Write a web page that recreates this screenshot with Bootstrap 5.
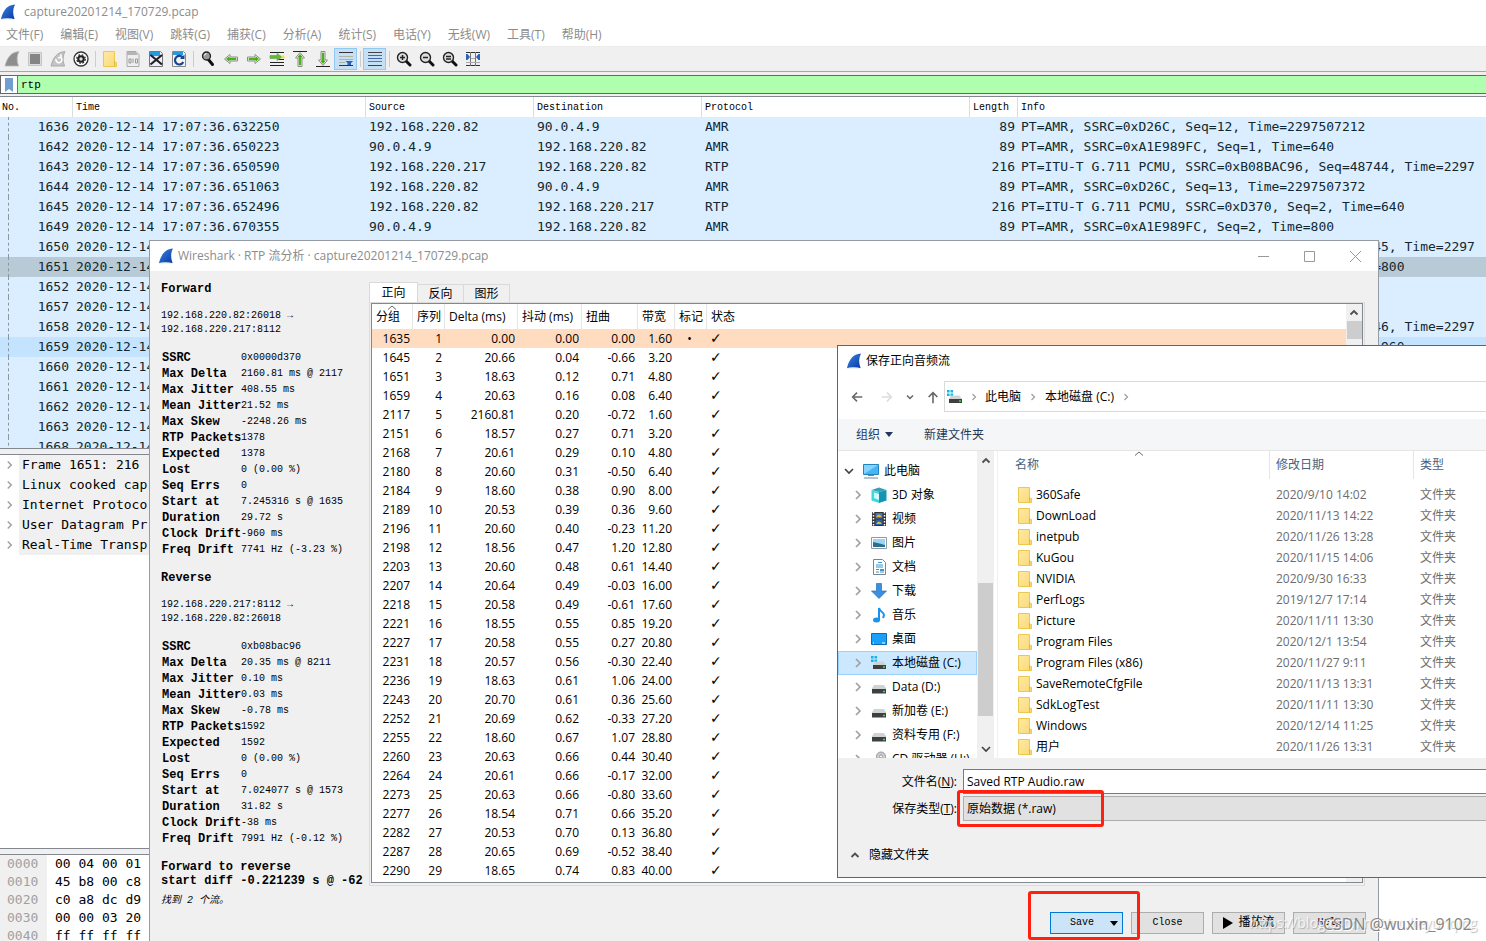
<!DOCTYPE html>
<html lang="zh-CN">
<head>
<meta charset="utf-8">
<meta name="viewport" content="width=device-width, initial-scale=1">
<title>capture20201214_170729.pcap</title>
<link rel="stylesheet" href="https://cdn.jsdelivr.net/npm/bootstrap@5.3.0/dist/css/bootstrap.min.css">
<style>
:root{--ui:"Open Sans","Noto Sans CJK SC",sans-serif;--mono:"DejaVu Sans Mono","Noto Sans CJK SC",monospace;--fixed:"Liberation Mono","Noto Sans CJK SC",monospace}
html,body{height:100%}
body{font:12px/20px var(--ui);color:#000;background:#fff;overflow:hidden}
svg{display:block;flex:none}
table{border-collapse:separate;border-spacing:0;table-layout:fixed}
th,td{padding:0;white-space:nowrap;overflow:hidden;font-weight:400}
button{border:0;background:none;padding:0;color:inherit}
a{color:inherit;text-decoration:none}
main>*{flex-shrink:0}
.app-title{height:24px;color:#8c8c8c}
.app-menu{height:22px;color:#8c8c8c;padding-left:6px;gap:17px;line-height:22px}
.tools{height:26px;background:#f0f0f0;border-bottom:1px solid #a6a6a6;border-top:1px solid #ececec}
.tools button{width:23px;height:22px;display:flex;align-items:center;justify-content:center}
.tools .pressed{background:#c5e0f5;border:1px solid #90c8f6}
.tools i{width:1px;height:16px;background:#ccc;margin:0 2px 0 3px}
.filter-wrap{background:#f0f0f0;padding:3px 0 2px}
.filter-box{border:1px solid #666;border-right:0;height:19px;background:#fff}
.filter-box button{width:17px;border-right:1px solid #777}
.filter-box input{background:#afffaf;border:0;outline:0;font:11px/17px var(--fixed);padding:2px 3px 0;border-radius:0}
.packets{height:353px;border-top:1px solid #828790;border-bottom:1px solid #828790;overflow:hidden}
.packets table{width:100%;font:13px/20px var(--mono);color:#12272e}
.packets th{height:20px;font:10px/18px var(--fixed);color:#000;background:#fff;border-left:1px solid #ddd;padding:2px 0 0 3px}
.packets th:first-child{border:0;padding-left:2px}
.packets td{height:20px;padding-left:4px;background:#daeeff}
.packets .cell-no{text-align:right;padding-right:3px}
.packets .cell-no::before{content:"";float:left;height:20px;margin-left:4px;border-left:1px dashed #8a979f}
.packets .cell-len{text-align:right;padding-right:2px}
.packets .picked td{background:#b9cad7}
.packets .near td{background:#c3e3ff}
.splitter{height:5px;background:#f0f0f0}
.tree-pane{height:395px;border-top:1px solid #828790;border-bottom:1px solid #828790;font:13px/20px var(--mono)}
.tree-pane li{height:20px}
.tree-pane li span{background:#f0f0f0;padding-left:3px}
.hex-pane{flex:1 1 0;min-height:0;border-top:1px solid #828790;font:13px/18px var(--mono)}
.hex-pane th{width:47px;background:#f0f0f0;color:#a0a0a0;padding-left:7px}
.hex-pane td{padding-left:8px}
.win{position:absolute;background:#f0f0f0}
.analysis{left:149px;right:107px;top:240px;bottom:0;border:1px solid #959aa3;border-bottom:0}
.win-title{height:30px;background:#fff;color:#8c8c8c;padding-left:8px}
.win-btns{gap:35px;padding-right:17px}
.stats{width:219px;font:10px/14px var(--fixed);padding:11px 0 0 11px}
.stats .heading,.stats th{font-size:12px;font-weight:700;white-space:nowrap}
.stats table{width:200px;line-height:16px}
.stats th{width:80px;padding-left:1px}
.stats th,.stats td{height:16px;overflow:visible}
.stats p{margin:0 0 13px}
.stats table+.heading{margin-top:13px}
.stats .last{margin-bottom:6px}
.tab-row{padding-top:11px}
.tab-row button{border:1px solid #d9d9d9;border-bottom:0;border-left:0;height:18px;width:46px;line-height:17px;background:#f0f0f0}
.tab-row button.active{background:#fff;width:49px;height:20px;border-left:1px solid #d9d9d9}
.tab-pane-box{border:1px solid #dcdcdc;padding:0 1px 2px;margin-right:13px}
.rtp-box{border:1px solid #828790;background:#fff;height:580px;overflow:hidden}
.rtp-box table{width:100%;line-height:19px}
.rtp-box th{height:25px;line-height:25px;padding-left:4px;border-right:1px solid #e5e5e5}
.rtp-box th:last-child{border:0}
.rtp-box th:first-child{background:no-repeat 19px 1px/8px 4px linear-gradient(#fff,#fff)}
.rtp-box td{height:19px;text-align:right;padding-right:3px}
.rtp-box td:nth-child(7){text-align:center}
.rtp-box td:last-child{text-align:left;padding-left:3px;font-family:"DejaVu Sans",sans-serif;font-size:14px}
.rtp-box tbody tr:first-child td{background:#ffdbbf}
.sort-mark{position:absolute;left:15px;top:1px}
.sb{width:17px;background:#f0f0f0}
.sb i{width:15px;margin:0 auto;background:#cdcdcd}
.dlg-buttons{gap:8px;padding-right:12px;margin-top:26px}
.dlg-buttons button{width:73px;height:22px;border:1px solid #adadad;background:#e1e1e1;font:10px/20px var(--fixed)}
.dlg-buttons .main{background:#cce4f7;border-color:#0078d7}
.dlg-buttons .cjk{font-size:12px}
.hint-box{position:absolute;border:3px solid #ff2010;border-radius:3px;pointer-events:none}
.hint-save{width:112px;height:49px;right:238px;bottom:1px}
.hint-type{width:147px;height:37px;left:119px;top:444px}
.save-dlg{left:837px;right:0;top:345px;height:533px;border:1px solid #646464;border-right:0}
.save-dlg .caption{height:29px;background:#fff;padding-left:8px}
.nav-row{height:44px;background:#fff;padding:6px 0 7px 12px}
.nav-arrows{width:94px;gap:12px;color:#6b6b6b}
.address{border:1px solid #d9d9d9;border-right:0;padding-left:2px}
.cmd-row{height:32px;background:#f5f6f7;border-bottom:1px solid #e5e5e5;color:#1e395b;padding-left:18px;gap:30px}
.browse{height:307px;background:#fff;overflow:hidden}
.places{width:139px;padding-top:8px}
.places a{height:24px;padding-left:15px;gap:5px;border:1px solid transparent;white-space:nowrap}
.places a.root{padding-left:5px}
.places a.active{background:#cce8ff;border-color:#99d1ff}
.files{border-left:1px solid #f0f0f0;margin-left:3px}
.files table{width:100%;line-height:21px}
.files th{height:26px;line-height:28px;color:#4c607a;border-left:1px solid #e5e5e5;padding-left:6px}
.files th:first-child{border:0;padding-left:17px;position:relative}
.files .sort-mark{left:136px;top:0}
.files thead tr{height:26px}
.files tbody::before{content:"";display:block;height:5px}
.files td{height:21px;color:#6d6d6d;padding-left:7px}
.files td:first-child{color:#000;padding-left:20px}
.field-rows{padding:11px 0 0;gap:2px}
.field-rows label{width:125px;text-align:right;padding-right:6px}
.field-rows input,.field-rows select{height:25px;border:1px solid #7a7a7a;border-right:0;border-radius:0;padding:0 3px;outline:0;font:12px/22px var(--ui);appearance:none;background:#fff;color:#000}
.field-rows select{background:#e1e1e1;border-color:#adadad}
.hide-row{padding:24px 0 0 11px}
.water{position:absolute;white-space:nowrap;pointer-events:none}
.water-url{right:9px;bottom:8px;font-size:14px;color:rgba(255,255,255,.8);text-shadow:1px 1px 1px rgba(140,140,140,.6)}
.water-user{right:14px;bottom:7px;font-size:16px;color:#858585;text-shadow:1px 1px 0 #fff}
</style>
</head>
<body>
<svg width="0" height="0" class="position-absolute" aria-hidden="true">
<defs>
<linearGradient id="gb" x1="0" x2="1" y1="0" y2="1"><stop offset="0" stop-color="#3b86dc"/><stop offset="1" stop-color="#0838a8"/></linearGradient>
<linearGradient id="gy" x1="0" x2="1" y1="0" y2="1"><stop offset="0" stop-color="#ffe9a3"/><stop offset="1" stop-color="#f9d978"/></linearGradient>
<symbol id="fin" viewBox="0 0 16 16"><path d="M1 15C3 7 7 1 15 .6 12.6 5 12.6 10 14.6 15Z" fill="url(#gb)"/><path d="M.5 15.3Q7 12.7 15 15.3Z" fill="#b8cbe5"/></symbol>
<symbol id="fin-grey" viewBox="0 0 16 16"><path d="M1 15C3 7 7 1 15 .6 12.6 5 12.6 10 14.6 15Z" fill="#8e8e8e" stroke="#bbb" stroke-width=".8"/></symbol>
<symbol id="stop" viewBox="0 0 16 16"><path d="M1.5 1.5h13v13h-13z" fill="#ddd" stroke="#c4c4c4"/><path d="M3 3h10v10H3z" fill="#858585"/></symbol>
<symbol id="restart" viewBox="0 0 16 16"><path d="M1 15C3 7 7 1 15 .6 12.6 5 12.6 10 14.6 15Z" fill="#c4c4c4" stroke="#aaa"/><path d="M6 8a3 3 0 1 0 5-1.500M8 7l3-.8-.2-2.700" fill="none" stroke="#fff" stroke-width="1.600"/></symbol>
<symbol id="gear" viewBox="0 0 16 16"><circle cx="8" cy="8" r="7" fill="#fff" stroke="#333" stroke-width="1.300"/><circle cx="8" cy="8" r="3.800" fill="#222"/><circle cx="8" cy="8" r="4.300" fill="none" stroke="#222" stroke-width="1.200" stroke-dasharray="1.800 1.600"/><circle cx="8" cy="8" r="1.700" fill="#ddd"/></symbol>
<symbol id="folder" viewBox="0 0 14 16"><path d="M.5.5h11v10.500l2 .5v4H.5z" fill="url(#gy)" stroke="#ecc94e"/><path d="M11.500 10v5.500" stroke="#e2b83c"/></symbol>
<symbol id="doc-grey" viewBox="0 0 16 16"><path d="M2 .5h9l3 3v12H2z" fill="#eee" stroke="#aaa"/><path d="M2 1h9l2 3H2z" fill="#b5b5b5"/><path d="M4 8h2v4H4zM8 7.500V12M10.500 8h2v4h-2z" fill="none" stroke="#999"/></symbol>
<symbol id="doc-close" viewBox="0 0 16 16"><path d="M1.500.5h11l2 2v13h-13z" fill="#eef" stroke="#777"/><path d="M2 1h10v4H2z" fill="#2a9ae0"/><path d="M2.500 4 14 13.500M14 4 2.500 13.500" stroke="#222" stroke-width="2.200"/></symbol>
<symbol id="doc-load" viewBox="0 0 16 16"><path d="M1.500.5h11l2 2v13h-13z" fill="#f4f4f4" stroke="#888"/><path d="M2 1h10v3H2z" fill="#2a9ae0"/><path d="M12 7a4.300 4.300 0 1 0 .2 4" fill="none" stroke="#17468c" stroke-width="2.200"/><path d="M13.500 3.500v4.500H9z" fill="#17468c"/></symbol>
<symbol id="lens" viewBox="0 0 16 16"><path d="m8 8 4.500 5.500" stroke="#111" stroke-width="3" stroke-linecap="round"/><circle cx="6.500" cy="5" r="4" fill="#999" stroke="#222" stroke-width="1.300"/><path d="M4.500 4.500a2 2 0 0 1 2-2" stroke="#fff" fill="none"/></symbol>
<symbol id="arr-l" viewBox="0 0 16 16"><path d="M1.500 8 7 3.500V6h7.500v4H7v2.500z" fill="#fff" stroke="#8b8b8b"/><path d="M3.500 8 6 6v1.300h7v1.400H6V10z" fill="#46ac10" stroke="#46ac10"/></symbol>
<symbol id="goto" viewBox="0 0 16 16"><path d="M1 1.500h14M9 8.500h6M1 11.500h14M1 14.500h14" stroke="#222"/><path d="M1 4.500h7v-2l5 3.500-5 3.500v-2H1z" fill="#5cbf2a" stroke="#7c9a6a" stroke-width=".7"/><path d="M12.500 4.500h3v3h-3z" fill="#f6dd45"/></symbol>
<symbol id="top" viewBox="0 0 16 16"><path d="M1 .5h14" stroke="#222"/><path d="M8 1.500 12.500 7H10v8.500H6V7H3.500z" fill="#fff" stroke="#8b8b8b"/><path d="M8 3.500 10 6H8.700v8H7.300V6H6z" fill="#46ac10" stroke="#46ac10"/></symbol>
<symbol id="tail" viewBox="0 0 16 16"><path d="M1 1.500h14M1 14.500h14" stroke="#333"/><path d="M1 5.500h14M1 8.500h14M1 11.500h6" stroke="#b0b4a8"/><path d="M7.500 10H15l-2 2v2H9.500v-2z" fill="#2b63b5"/></symbol>
<symbol id="colors" viewBox="0 0 16 16"><path d="M1 1.500h14M1 14.500h14" stroke="#444"/><path d="M1 4.500h14" stroke="#f22"/><path d="M1 7.500h14" stroke="#4267a8"/><path d="M1 10.500h14" stroke="#a3529c"/></symbol>
<symbol id="zoom" viewBox="0 0 16 16"><path d="m10 10 4 4" stroke="#111" stroke-width="3" stroke-linecap="round"/><circle cx="6.500" cy="6.500" r="5" fill="#ddd" stroke="#222" stroke-width="1.400"/></symbol>
<symbol id="cols" viewBox="0 0 16 16"><path d="M1 1.500h14M1 14.500h14" stroke="#333"/><path d="M5.500 1v14M10.500 1v14" stroke="#777"/><path d="M1 3h1.500L5 6 2.500 9H1zM15 3h-1.500L11 6l2.500 3H15z" fill="#2b63b5"/><path d="M1 11.500h14M6 7.500h4" stroke="#aaa"/></symbol>
<symbol id="chev-r" viewBox="0 0 16 16"><path d="m6 4 4 4-4 4" fill="none" stroke="#a0a0a0" stroke-width="1.700"/></symbol>
<symbol id="chev-d" viewBox="0 0 16 16"><path d="m4 6 4 4 4-4" fill="none" stroke="#404040" stroke-width="1.600"/></symbol>
<symbol id="chev-u" viewBox="0 0 16 16"><path d="m4.500 10 3.500-3.500 3.500 3.500" fill="none" stroke="#505050" stroke-width="1.900"/></symbol>
<symbol id="back" viewBox="0 0 16 16"><path d="M14 8H3M8 3 3 8l5 5" fill="none" stroke="currentColor" stroke-width="1.800"/></symbol>
<symbol id="drive" viewBox="0 0 16 16"><path d="M3 6h10l2.500 4H.5z" fill="#d0d3d5"/><path d="M1 10h14v4.500H1z" fill="#3c4040"/><path d="M12 12.500h2" stroke="#3fdc4f" stroke-width="1.500"/></symbol>
<symbol id="drive-c" viewBox="0 0 16 16"><path d="M0 1h2.600v2.500H0zM3.500 1h2.600v2.500H3.500zM0 4.500h2.600V7H0zM3.500 4.500h2.600V7H3.500z" fill="#12b7e8"/><path d="M4 6.500h8.500l2.500 3.500H2z" fill="#d0d3d5"/><path d="M2 10h13v4H2z" fill="#3c4040"/><path d="M12 12h2" stroke="#3fdc4f" stroke-width="1.500"/></symbol>
<symbol id="pc" viewBox="0 0 16 16"><path d="M.5 1.500h15v10H.5z" fill="#45b5f5" stroke="#2384bd"/><path d="M1 2h14L1 11z" fill="#85d3ff"/><path d="M5 12.500h6M1 15h14" stroke="#6b8aa0"/></symbol>
<symbol id="cube" viewBox="0 0 16 16"><path d="m8 .5 7.500 2.500L8 5 .5 3z" fill="#3a9fb5"/><path d="M.5 3 8 5v11L.5 13.500z" fill="#40d7e2"/><path d="M15.500 3 8 5v11l7.500-2.500z" fill="#1495b2"/><path d="M3 5.500 8 7v6l-5-2z" fill="#d6fbfd"/></symbol>
<symbol id="film" viewBox="0 0 16 16"><path d="M1 1h14v14H1z" fill="#333"/><path d="M2.500 1v14M13.500 1v14" stroke="#fff" stroke-width="1.500" stroke-dasharray="1.500 1.500"/><path d="M4.500 2h7v5.500h-7z" fill="#3c79c4"/><path d="M4.500 8.500h7V14h-7z" fill="#2c60a4"/><path d="M5 6q3-5 6 0M5 13q3-5 6 0" fill="#e6b52e"/></symbol>
<symbol id="pic" viewBox="0 0 16 16"><path d="M.5 2.500h15v11H.5z" fill="#fff" stroke="#8d9aa3"/><path d="M2 4h12v8H2z" fill="#9cd5f4"/><path d="M2 7q5 1 12 3v2H2z" fill="#2d6d8d"/></symbol>
<symbol id="doc" viewBox="0 0 16 16"><path d="M2.500.5h9l3 3v12h-12z" fill="#fff" stroke="#7d8388"/><path d="M7 3.500h4M5 6h7M5 8h7M5 10.500h3M5 13h3M9 13h4" stroke="#3996cf"/><path d="M9 10h4v2H9z" fill="#3996cf"/></symbol>
<symbol id="down" viewBox="0 0 16 16"><path d="M5.500.5h5V8h5L8 15.500.5 8h5z" fill="#3b8fdc" stroke="#2473bb" stroke-width=".7"/></symbol>
<symbol id="note" viewBox="0 0 16 16"><ellipse cx="5.500" cy="13" rx="3.500" ry="2.500" fill="#1793ef"/><path d="M8 13V1q1 3 3.500 4.500T12 11" fill="none" stroke="#1793ef" stroke-width="2"/></symbol>
<symbol id="desk" viewBox="0 0 16 16"><path d="M.5 2.500h15v11H.5z" fill="#18a0fb" stroke="#0c6cb4"/><path d="M2 12h1M11 12h3" stroke="#fff"/></symbol>
<symbol id="cd" viewBox="0 0 16 16"><circle cx="10" cy="5.500" r="4.500" fill="#ccc" stroke="#999"/><circle cx="10" cy="5.500" r="1.500" fill="#fff" stroke="#999"/><path d="M1 11h14v4H1z" fill="#555"/></symbol>
</defs>
</svg>

<main class="d-flex flex-column vh-100">
  <header class="app-title d-flex align-items-center"><svg width="16" height="16"><use href="#fin"/></svg><span class="ps-1 ms-1">capture20201214_170729.pcap</span></header>
  <nav class="app-menu d-flex">
    <a href="#">文件(F)</a><a href="#">编辑(E)</a><a href="#">视图(V)</a><a href="#">跳转(G)</a><a href="#">捕获(C)</a><a href="#">分析(A)</a><a href="#">统计(S)</a><a href="#">电话(Y)</a><a href="#">无线(W)</a><a href="#">工具(T)</a><a href="#">帮助(H)</a>
  </nav>
  <div class="tools d-flex align-items-center" id="toolbar"></div>
  <div class="filter-wrap">
    <form class="filter-box d-flex">
      <button type="button" aria-label="书签"><svg width="16" height="16" viewBox="0 0 16 16"><path d="M4 1h8v14l-4-3-4 3z" fill="#729fcf"/></svg></button>
      <input class="flex-grow-1" aria-label="显示过滤器" value="rtp">
    </form>
  </div>
  <section class="packets">
    <table>
      <colgroup><col style="width:72px"><col style="width:293px"><col style="width:168px"><col style="width:168px"><col style="width:268px"><col style="width:48px"><col></colgroup>
      <thead><tr><th>No.</th><th>Time</th><th>Source</th><th>Destination</th><th>Protocol</th><th>Length</th><th>Info</th></tr></thead>
      <tbody id="packets"></tbody>
    </table>
  </section>
  <div class="splitter"></div>
  <section class="tree-pane">
    <ul class="list-unstyled m-0" id="details"></ul>
  </section>
  <div class="splitter"></div>
  <section class="hex-pane overflow-hidden">
    <table class="w-100"><tbody id="hex"></tbody></table>
  </section>
</main>

<section class="win analysis d-flex flex-column">
  <div class="win-title d-flex flex-shrink-0 align-items-center justify-content-between">
    <div class="d-flex align-items-center gap-1"><svg width="16" height="16"><use href="#fin"/></svg><span>Wireshark · RTP 流分析 · capture20201214_170729.pcap</span></div>
    <div class="win-btns d-flex">
      <button aria-label="最小化"><svg width="11" height="11"><path d="M0 5.500h11" stroke="#999"/></svg></button>
      <button aria-label="最大化"><svg width="11" height="11"><path d="M.5.5h10v10H.5z" fill="none" stroke="#999"/></svg></button>
      <button aria-label="关闭"><svg width="11" height="11"><path d="m0 0 11 11M11 0 0 11" stroke="#999"/></svg></button>
    </div>
  </div>
  <div class="d-flex">
    <div class="stats flex-shrink-0">
      <p class="heading">Forward</p>
      <p>192.168.220.82:26018 →<br>192.168.220.217:8112</p>
      <table id="fwd"></table>
      <p class="heading">Reverse</p>
      <p>192.168.220.217:8112 →<br>192.168.220.82:26018</p>
      <table id="rev"></table>
      <p class="heading last">Forward to reverse<br>start diff -0.221239 s @ -62</p>
      <em class="d-block">找到 2 个流。</em>
    </div>
    <div class="flex-grow-1">
      <div class="tab-row d-flex align-items-end"><button class="active">正向</button><button>反向</button><button>图形</button></div>
      <div class="tab-pane-box">
        <div class="rtp-box d-flex position-relative">
          <svg class="sort-mark" width="10" height="5"><path d="m1 4.500 4-3.500 4 3.500" fill="none" stroke="#666"/></svg>
          <div class="flex-grow-1">
            <table>
              <colgroup><col style="width:41px"><col style="width:32px"><col style="width:73px"><col style="width:64px"><col style="width:56px"><col style="width:37px"><col style="width:32px"><col></colgroup>
              <thead><tr><th>分组</th><th>序列</th><th>Delta (ms)</th><th>抖动 (ms)</th><th>扭曲</th><th>带宽</th><th>标记</th><th>状态</th></tr></thead>
              <tbody id="rtp"></tbody>
            </table>
          </div>
          <div class="sb d-flex flex-column"><svg class="mx-auto" width="16" height="17"><use href="#chev-u"/></svg><i style="height:18px"></i></div>
        </div>
      </div>
      <div class="dlg-buttons d-flex justify-content-end">
        <button class="main d-flex align-items-center justify-content-end gap-3 pe-1">Save<svg width="8" height="5"><path d="M0 0h8L4 5z"/></svg></button>
        <button>Close</button>
        <button class="d-flex align-items-center justify-content-center gap-1"><svg width="12" height="12"><path d="m1 0 10 6-10 6z"/></svg><span class="cjk">播放流</span></button>
        <button>Help</button>
      </div>
    </div>
  </div>
  <div class="hint-box hint-save"></div>
</section>

<section class="win save-dlg">
  <div class="caption d-flex align-items-center gap-1"><svg width="16" height="16"><use href="#fin"/></svg><span>保存正向音频流</span></div>
  <div class="nav-row d-flex align-items-stretch">
    <div class="nav-arrows d-flex align-items-center">
      <button class="me-1" aria-label="后退"><svg width="14" height="14"><use href="#back"/></svg></button>
      <button aria-label="前进"><svg width="14" height="14" viewBox="0 0 16 16"><path d="M2 8h11M8 3l5 5-5 5" fill="none" stroke="#ddd" stroke-width="1.800"/></svg></button>
      <button aria-label="最近"><svg width="8" height="8" viewBox="0 0 16 16"><path d="m2 5 6 6 6-6" fill="none" stroke="#666" stroke-width="3"/></svg></button>
      <button aria-label="向上"><svg width="14" height="14" viewBox="0 0 16 16"><path d="M8 15V3M3 8l5-5 5 5" fill="none" stroke="#666" stroke-width="1.800"/></svg></button>
    </div>
    <div class="address flex-grow-1 d-flex align-items-center">
      <svg width="16" height="16"><use href="#drive-c"/></svg>
      <svg class="mx-1" width="14" height="12"><use href="#chev-r"/></svg><a href="#">此电脑</a>
      <svg class="mx-1" width="16" height="12"><use href="#chev-r"/></svg><a href="#">本地磁盘 (C:)</a>
      <svg class="mx-1" width="16" height="12"><use href="#chev-r"/></svg>
    </div>
  </div>
  <div class="cmd-row d-flex align-items-center">
    <button class="d-flex align-items-center">组织<svg class="ms-1" width="10" height="5"><path d="M1 0h8L5 5z" fill="#1e395b"/></svg></button>
    <button>新建文件夹</button>
  </div>
  <div class="browse d-flex">
    <nav class="places flex-shrink-0" id="places"></nav>
    <div class="sb flex-shrink-0 d-flex flex-column"><svg class="mx-auto" width="16" height="19"><use href="#chev-u"/></svg><i class="mt-auto" style="height:133px"></i><svg class="mx-auto mt-4" width="16" height="18"><use href="#chev-d"/></svg></div>
    <div class="files flex-grow-1">
      <table>
        <colgroup><col style="width:271px"><col style="width:144px"><col></colgroup>
        <thead><tr><th>名称<svg class="sort-mark" width="10" height="5"><path d="m1 4.500 4-3.500 4 3.500" fill="none" stroke="#666"/></svg></th><th>修改日期</th><th>类型</th></tr></thead>
        <tbody id="files"></tbody>
      </table>
    </div>
  </div>
  <div class="field-rows d-flex flex-column">
    <div class="d-flex align-items-center"><label for="fname">文件名(<u>N</u>):</label><input id="fname" class="flex-grow-1" value="Saved RTP Audio.raw"></div>
    <div class="d-flex align-items-center"><label for="ftype">保存类型(<u>T</u>):</label><select id="ftype" class="flex-grow-1"><option>原始数据 (*.raw)</option></select></div>
  </div>
  <div class="hide-row"><button class="d-flex align-items-center gap-1"><svg width="12" height="12" viewBox="2 2 12 12"><use href="#chev-u" width="16" height="16"/></svg><span class="ms-1">隐藏文件夹</span></button></div>
  <div class="hint-box hint-type"></div>
</section>
<div class="water water-url">https://blog.csdn.net/wukeyunqing</div>
<div class="water water-user">CSDN @wuxin_9102</div>

<script>
const put = (id, html) => document.getElementById(id).innerHTML = html;
const use = (n, w = 16, h = 16, inner = '') => `<svg width="${w}" height="${h}"><use href="#${n}"/>${inner}</svg>`;
const crop = (n, w, h, box) => `<svg width="${w}" height="${h}" viewBox="${box}"><use href="#${n}" width="16" height="16"/></svg>`;
const flip = n => `<svg width="16" height="16" viewBox="0 0 16 16"><g transform="rotate(180 8 8)"><use href="#${n}" width="16" height="16"/></g></svg>`;
const stroke = d => `<path d="${d}" stroke="#222" stroke-width="1.500"/>`;

put('toolbar', [
  ['开始', use('fin-grey')], ['停止', use('stop')], ['重新开始', use('restart')], ['选项', use('gear')], 0,
  ['打开', use('folder', 14)], ['保存', use('doc-grey')], ['关闭文件', use('doc-close')], ['重新加载', use('doc-load')], 0,
  ['查找', use('lens')], ['上一个', use('arr-l')], ['下一个', flip('arr-l')],
  ['转到', use('goto')], ['首个', use('top')], ['末个', flip('top')],
  ['自动滚动', use('tail'), 'pressed'], 0, ['着色', use('colors'), 'pressed'], 0,
  ['放大', use('zoom', 16, 16, stroke('M4 6.500h5M6.500 4v5'))], ['缩小', use('zoom', 16, 16, stroke('M4 6.500h5'))],
  ['原始大小', use('zoom', 16, 16, stroke('M4 5.500h5M4 8h5'))], ['调整列宽', use('cols')]
].map(b => b ? `<button class="${b[2] || ''}" aria-label="${b[0]}">${b[1]}</button>` : '<i></i>').join(''));

const A = '192.168.220.82', B = '90.0.4.9', C = '192.168.220.217', D = '2020-12-14 17:07:36.';
const G = 'PT=ITU-T G.711 PCMU, SSRC=';
put('packets', [
  [1636, D + '632250', A, B, 'AMR', 89, 'PT=AMR, SSRC=0xD26C, Seq=12, Time=2297507212'],
  [1642, D + '650223', B, A, 'AMR', 89, 'PT=AMR, SSRC=0xA1E989FC, Seq=1, Time=640'],
  [1643, D + '650590', C, A, 'RTP', 216, G + '0xB08BAC96, Seq=48744, Time=2297'],
  [1644, D + '651063', A, B, 'AMR', 89, 'PT=AMR, SSRC=0xD26C, Seq=13, Time=2297507372'],
  [1645, D + '652496', A, C, 'RTP', 216, G + '0xD370, Seq=2, Time=640'],
  [1649, D + '670355', B, A, 'AMR', 89, 'PT=AMR, SSRC=0xA1E989FC, Seq=2, Time=800'],
  [1650, 0, '', '', '', '', G + '0xB08BAC96, Seq=48745, Time=2297'],
  [1651, 0, '', '', '', '', G + '0xD370, Seq=3, Time=800', 'picked'],
  [1652], [1657],
  [1658, 0, '', '', '', '', G + '0xB08BAC96, Seq=48746, Time=2297'],
  [1659, 0, '', '', '', '', G + '0xD370, Seq=4, Time=960', 'near'],
  [1660], [1661], [1662], [1663], [1668]
].map(r => `<tr class="${r[7] || ''}"><td class="cell-no">${r[0]}</td><td>${r[1] || '2020-12-14'}</td><td>${r[2] || ''}</td><td>${r[3] || ''}</td><td>${r[4] || ''}</td><td class="cell-len">${r[5] || ''}</td><td>${r[6] || ''}</td></tr>`).join(''));

put('details', ['Frame 1651: 216', 'Linux cooked cap', 'Internet Protoco', 'User Datagram Pr', 'Real-Time Transp']
  .map(t => `<li class="d-flex align-items-center">${use('chev-r', 19, 14)}<span class="flex-grow-1">${t}</span></li>`).join(''));
put('hex', [['0000', '00 04 00 01'], ['0010', '45 b8 00 c8'], ['0020', 'c0 a8 dc d9'], ['0030', '00 00 03 20'], ['0040', 'ff ff ff ff']]
  .map(r => `<tr><th>${r[0]}</th><td>${r[1]}</td></tr>`).join(''));

const names = ['SSRC', 'Max Delta', 'Max Jitter', 'Mean Jitter', 'Max Skew', 'RTP Packets', 'Expected', 'Lost', 'Seq Errs', 'Start at', 'Duration', 'Clock Drift', 'Freq Drift'];
const stats = v => names.map((n, i) => `<tr><th>${n}</th><td>${v[i]}</td></tr>`).join('');
put('fwd', stats(['0x0000d370', '2160.81 ms @ 2117', '408.55 ms', '21.52 ms', '-2248.26 ms', '1378', '1378', '0 (0.00 %)', '0', '7.245316 s @ 1635', '29.72 s', '-960 ms', '7741 Hz (-3.23 %)']));
put('rev', stats(['0xb08bac96', '20.35 ms @ 8211', '0.10 ms', '0.03 ms', '-0.78 ms', '1592', '1592', '0 (0.00 %)', '0', '7.024077 s @ 1573', '31.82 s', '-38 ms', '7991 Hz (-0.12 %)']));

put('rtp', `1635 0.00 0.00 0.00 1.60
1645 20.66 0.04 -0.66 3.20
1651 18.63 0.12 0.71 4.80
1659 20.63 0.16 0.08 6.40
2117 2160.81 0.20 -0.72 1.60
2151 18.57 0.27 0.71 3.20
2168 20.61 0.29 0.10 4.80
2180 20.60 0.31 -0.50 6.40
2184 18.60 0.38 0.90 8.00
2189 20.53 0.39 0.36 9.60
2196 20.60 0.40 -0.23 11.20
2198 18.56 0.47 1.20 12.80
2203 20.60 0.48 0.61 14.40
2207 20.64 0.49 -0.03 16.00
2218 20.58 0.49 -0.61 17.60
2221 18.55 0.55 0.85 19.20
2227 20.58 0.55 0.27 20.80
2231 20.57 0.56 -0.30 22.40
2236 18.63 0.61 1.06 24.00
2243 20.70 0.61 0.36 25.60
2252 20.69 0.62 -0.33 27.20
2255 18.60 0.67 1.07 28.80
2260 20.63 0.66 0.44 30.40
2264 20.61 0.66 -0.17 32.00
2273 20.63 0.66 -0.80 33.60
2277 18.54 0.71 0.66 35.20
2282 20.53 0.70 0.13 36.80
2287 20.65 0.69 -0.52 38.40
2290 18.65 0.74 0.83 40.00`.split('\n').map((l, i) => {
  const r = l.split(' ');
  r.splice(1, 0, i + 1);
  return `<tr>${r.map(c => `<td>${c}</td>`).join('')}<td>${i ? '' : '•'}</td><td>✓</td></tr>`;
}).join(''));

put('places', [['pc', '此电脑', 'root'], ['cube', '3D 对象'], ['film', '视频'], ['pic', '图片'], ['doc', '文档'], ['down', '下载'], ['note', '音乐'], ['desk', '桌面'], ['drive-c', '本地磁盘 (C:)', 'active'], ['drive', 'Data (D:)'], ['drive', '新加卷 (E:)'], ['drive', '资料专用 (F:)'], ['cd', 'CD 驱动器 (H:)']]
  .map(p => `<a href="#" class="d-flex align-items-center ${p[2] || ''}">${p[2] === 'root' ? crop('chev-d', 10, 14, '3 1 10 14') : crop('chev-r', 8, 12, '4 2 8 12')}<span class="ms-1">${use(p[0])}</span><span>${p[1]}</span></a>`).join(''));

put('files', [['360Safe', '2020/9/10 14:02'], ['DownLoad', '2020/11/13 14:22'], ['inetpub', '2020/11/26 13:28'], ['KuGou', '2020/11/15 14:06'], ['NVIDIA', '2020/9/30 16:33'], ['PerfLogs', '2019/12/7 17:14'], ['Picture', '2020/11/11 13:30'], ['Program Files', '2020/12/1 13:54'], ['Program Files (x86)', '2020/11/27 9:11'], ['SaveRemoteCfgFile', '2020/11/13 13:31'], ['SdkLogTest', '2020/11/11 13:30'], ['Windows', '2020/12/14 11:25'], ['用户', '2020/11/26 13:31']]
  .map(f => `<tr><td><div class="d-flex align-items-center gap-1">${use('folder', 14)}<span>${f[0]}</span></div></td><td>${f[1]}</td><td>文件夹</td></tr>`).join(''));
</script>
<script src="https://cdn.jsdelivr.net/npm/bootstrap@5.3.0/dist/js/bootstrap.bundle.min.js"></script>
</body>
</html>
